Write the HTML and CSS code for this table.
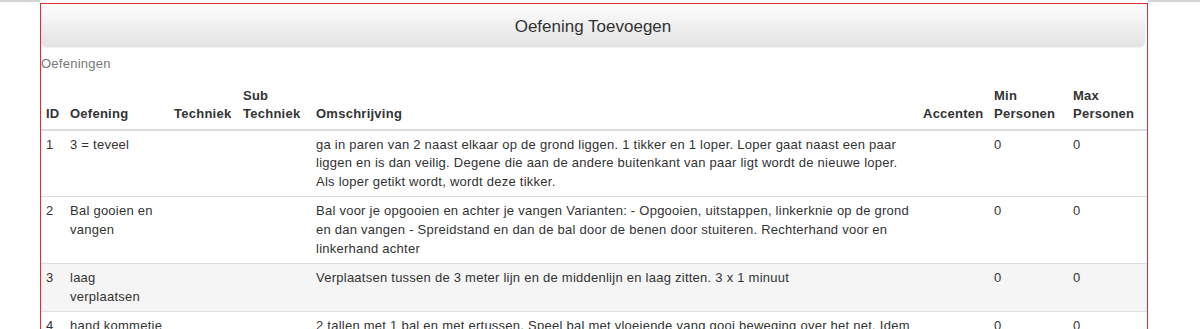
FILE: index.html
```html
<!DOCTYPE html>
<html lang="nl">
  <head>
    <meta charset="UTF-8" />
    <meta name="viewport" content="width=device-width, initial-scale=1.0" />
    <title>Oefeningen</title>
    <link rel="stylesheet" href="styles.css">
  </head>
  <body>
    <div class="topline"></div>

    <div class="wrapper">
      <div class="title-bar">Oefening Toevoegen</div>

      <table class="exercises">
        <caption>Oefeningen</caption>
        <colgroup>
          <col class="col-id" />
          <col class="col-name" />
          <col class="col-tech" />
          <col class="col-subtech" />
          <col class="col-desc" />
          <col class="col-accent" />
          <col class="col-min" />
          <col class="col-max" />
        </colgroup>
        <thead>
          <tr>
            <th>ID</th>
            <th>Oefening</th>
            <th>Techniek</th>
            <th>Sub Techniek</th>
            <th>Omschrijving</th>
            <th>Accenten</th>
            <th>Min Personen</th>
            <th>Max Personen</th>
          </tr>
        </thead>
        <tbody>
          <tr>
            <td>1</td>
            <td>3 = teveel</td>
            <td></td>
            <td></td>
            <td>ga in paren van 2 naast elkaar op de grond liggen. 1 tikker en 1 loper. Loper gaat naast een paar liggen en is dan veilig. Degene die aan de andere buitenkant van paar ligt wordt de nieuwe loper. Als loper getikt wordt, wordt deze tikker.</td>
            <td></td>
            <td>0</td>
            <td>0</td>
          </tr>
          <tr>
            <td>2</td>
            <td>Bal gooien en vangen</td>
            <td></td>
            <td></td>
            <td>Bal voor je opgooien en achter je vangen Varianten: - Opgooien, uitstappen, linkerknie op de grond en dan vangen - Spreidstand en dan de bal door de benen door stuiteren. Rechterhand voor en linkerhand achter</td>
            <td></td>
            <td>0</td>
            <td>0</td>
          </tr>
          <tr class="hover">
            <td>3</td>
            <td>laag verplaatsen</td>
            <td></td>
            <td></td>
            <td>Verplaatsen tussen de 3 meter lijn en de middenlijn en laag zitten. 3 x 1 minuut</td>
            <td></td>
            <td>0</td>
            <td>0</td>
          </tr>
          <tr>
            <td>4</td>
            <td>hand kommetje</td>
            <td></td>
            <td></td>
            <td>2 tallen met 1 bal en met ertussen. Speel bal met vloeiende vang gooi beweging over het net. Idem met beide handen boven het hoofd.</td>
            <td></td>
            <td>0</td>
            <td>0</td>
          </tr>
        </tbody>
      </table>
    </div>
  </body>
</html>
```

FILE: styles.css
```css
body {
  margin: 0;
  font-family: "Liberation Sans", Arial, sans-serif;
  font-size: 13px;
  line-height: 1.42857;
  letter-spacing: 0.25px;
  color: #333;
  background: #fff;
}
.topline {
  height: 2px;
  background-color: #d4d4d4;
}
.wrapper {
  margin: 1px 0 0 40px;
  width: 1106px;
  border: 1px solid #d8302f;
  background-color: #fff;
  /* hide the top rule above the box */
  box-shadow: 0 -3px 0 #fff;
}
.title-bar {
  margin-right: 2px;
  padding-top: 3px;
  height: 40px;
  line-height: 40px;
  text-align: center;
  font-size: 17px;
  letter-spacing: normal;
  color: #333;
  border-radius: 5px;
  background: linear-gradient(#fdfdfd, #e3e3e3);
  box-shadow: 0 1px 1px rgba(0, 0, 0, 0.06);
}
.exercises {
  width: 100%;
  table-layout: fixed;
  border-collapse: separate;
  border-spacing: 0;
}
.exercises caption {
  padding: 8px 0;
  text-align: left;
  color: #777;
}
.col-id { width: 24px; }
.col-name { width: 104px; }
.col-tech { width: 69px; }
.col-subtech { width: 73px; }
.col-desc { width: 607px; }
.col-accent { width: 71px; }
.col-min { width: 79px; }
.col-max { width: 79px; }
.exercises th,
.exercises td {
  padding: 5px;
  text-align: left;
}
.exercises th {
  font-weight: bold;
  vertical-align: bottom;
  border-bottom: 2px solid #ddd;
}
.exercises td {
  vertical-align: top;
  border-top: 1px solid #ddd;
}
.exercises tbody tr:first-child td {
  border-top: 0;
}
.exercises tr.hover td {
  background-color: #f5f5f5;
}
```
